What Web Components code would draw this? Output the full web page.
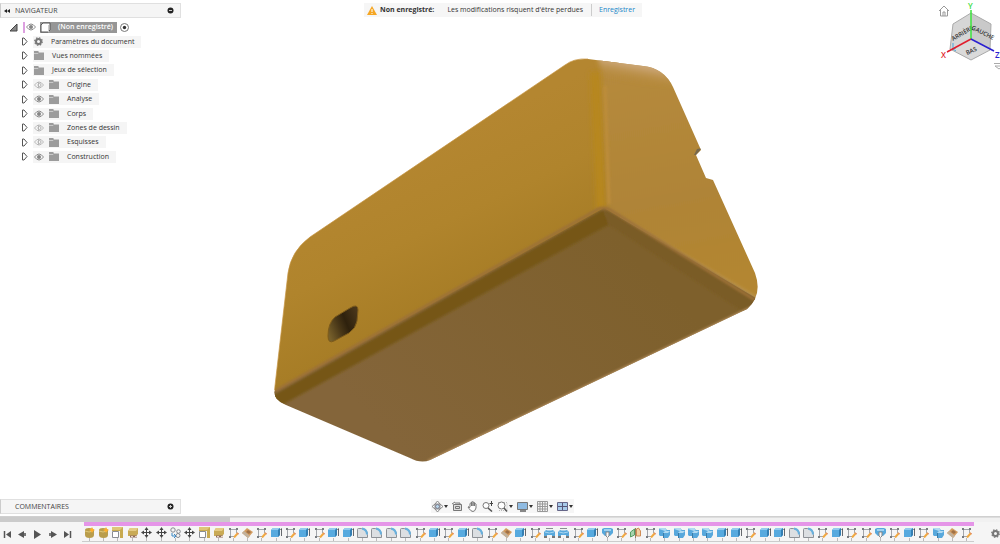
<!DOCTYPE html>
<html lang="fr">
<head>
<meta charset="utf-8">
<title>Modélisation</title>
<style>
html,body{margin:0;height:100%;overflow:hidden}
body{font-family:"Open Sans","Noto Sans",sans-serif;font-size:7px;line-height:12px;color:#333;background:#fff}
</style>
</head>
<body>
<cad-app></cad-app>
<script>
const base = `*{box-sizing:border-box}button{all:unset;display:flex;flex:none;cursor:pointer}svg{display:block;flex:none}`;
const svg = (w, h, body) => `<svg width="${w}" height="${h}" viewBox="0 0 ${w} ${h}" fill="none" aria-hidden="true">${body}</svg>`;
const define = (name, render) => customElements.define(name, class extends HTMLElement {
  connectedCallback() {
    if (this.shadowRoot) return;
    const t = document.createElement('template');
    t.innerHTML = render(this);
    this.attachShadow({ mode: 'open' }).append(t.content.cloneNode(true));
  }
});

const sketch = `<path d="M2.500 2v7M2 2.500h6.500V6M2 9.500h4" stroke="#a3a6ab"/><path d="M1 1h2v2H1zM8 1h2v2H8zM1 9h2v2H1z" fill="#777b80"/><path d="M6 10.500L10 6" stroke="#f0a840" stroke-width="2"/><path d="M9 6l2 1" stroke="#e08a6a"/>`;
const blueBox = `<path d="M0 3l2-2h7v7l-2 2H0z" fill="#57aadf"/><path d="M0 3l2-2h7L7 3z" fill="#94cbee"/><path d="M7 3l2-2v7l-2 2z" fill="#347fb3"/>`;
const goldBox = `<path d="M1 4l2-3h8v6L9 9H1z" fill="#c9aa55"/><path d="M1 4l2-3h8L9 4z" fill="#e5cb85"/>`;
const icons = {
  N: svg(11, 11, `<path d="M1 3q0-2 4-2t5 2v5q0 3-4.500 3T1 8z" fill="#b99d4c"/><path d="M1 4q4 2 8 0" stroke="#e0c878"/><path d="M8 0l1 2 2 1-2 1-1 2-1-2-2-1 2-1z" fill="#ffae2b"/>`),
  Q: svg(11, 11, `<path d="M0 0h11v11H8V4H0z" fill="#c8aa50"/><path d="M0 0h11L8 3H0z" fill="#dfc578"/><path d="M.5 4.500h6v6h-6z" fill="#fff" stroke="#8a8d92"/>`),
  L: svg(11, 11, goldBox + `<path d="M3 9.500h7" stroke="#8c6a5c" stroke-width="2"/><path d="M4 9.500h2M8 9.500h2" stroke="#e7d5c8"/>`),
  M: svg(11, 11, `<path d="M5.500 2v7M2 5.500h7" stroke="#454545"/><path d="M5.500 0l2 3h-4zM5.500 11l2-3h-4zM0 5.500l3-2v4zM11 5.500l-3-2v4z" fill="#454545"/>`),
  J: svg(11, 11, `<circle cx="3" cy="3" r="2.200" stroke="#85888d"/><circle cx="8.500" cy="4.500" r="1.800" stroke="#85888d"/><circle cx="8" cy="8.500" r="2" stroke="#85888d"/><path d="M2 6v3h3M4 7l2 2-2 2" stroke="#3b88c4"/>`),
  S: svg(11, 11, sketch),
  P: svg(11, 11, `<path d="M0 6l5-5 6 4-5 6z" fill="#d39c60"/><path d="M0 6l2-2 6 5-2 2z" fill="#c1b19c"/><path d="M4 5l2-2 3 2-2 2z" fill="#9f7147"/>`),
  E: svg(11, 11, blueBox + `<path d="M10.500 2v7" stroke="#66696e"/><path d="M9 3l1.500-2L12 3z" fill="#55585c"/>`),
  F: svg(11, 11, `<path d="M.5 2.500q0-1 1-1h3q6 1 6 6v3H.5z" fill="#dcdfe2" stroke="#8d9196"/><path d="M5 1.500q5 1 5 6" stroke="#68b0dd" stroke-width="2"/>`),
  R: svg(11, 11, `<path d="M0 5l2-2q3 1 7 0l2 2v5H8V8H3v2H0z" fill="#58a8dc"/><path d="M1 5q4 2 9 0" stroke="#a9d6f1"/><path d="M2 1.500h7" stroke="#8a8d92"/><path d="M0 10h3M8 10h3" stroke="#777" stroke-width="2"/>`),
  H: svg(11, 11, `<path d="M0 2l2-1h7l2 1v4L8 9H3L0 6z" fill="#57a8dc"/><path d="M2 2h7v2H2z" fill="#9fd2f0"/><path d="M4 5h3v4L5.500 10.500 4 9z" fill="#f8f8f8" stroke="#888"/>`),
  W: svg(11, 11, `<path d="M.5 10V5l4-3v6z" fill="#a6d3ad" stroke="#599e65"/><path d="M6.500 9V2l2-1 2 3v5z" fill="#f3cfa2" stroke="#d08d55"/><path d="M5.500 1v10" stroke="#9b7c5d"/>`),
  C: svg(11, 11, `<path d="M0 2l1-1h5l2 2h3v5l-2 3H4V9H1L0 8z" fill="#58a8dc"/><path d="M0 2l1-1h5l2 2-2 1zM4 6l2-2h5L9 6z" fill="#b0daf2"/><path d="M4.500 6v5" stroke="#3b7ba6"/>`)
};
const steps = 'NNQLMMJMQLSPSESESEEFFFFSESEFSPESRRSEHSWSCCCCEESEEFFSESSHSESCPS';
const names = {N:'Nouveau composant',Q:'Base',L:'Liaison rigide',M:'Déplacer',J:'Joint',S:'Esquisse',P:'Plan',E:'Extrusion',F:'Congé',R:'Révolution',H:'Perçage',W:'Symétrie',C:'Combiner'};

const knob = (d) => svg(7, 7, `<circle cx="3.500" cy="3.500" r="3" fill="#222"/><path d="${d}" stroke="#ccc"/>`);
const folder = svg(10, 9, `<path d="M0 0h4l1 1h5v8H0z" fill="#9c9c9c"/><path d="M0 2.500h4l1-1h5" stroke="#c9c9c9"/>`);
const eye = svg(10, 8, `<path d="M.5 4q4.500-6 9 0-4.500 6-9 0z" stroke="#8c8c8c"/><circle cx="5" cy="4" r="2" fill="#858585"/>`);
const eyeOff = svg(10, 8, `<path d="M.5 4q4.500-6 9 0-4.500 6-9 0zM4.500 1v6" stroke="#b8b8b8"/><circle cx="5.500" cy="4" r="1.500" stroke="#b5b5b5"/>`);
const gear = svg(9, 9, `<circle cx="4.500" cy="4.500" r="2.500" stroke="#777" stroke-width="2"/><circle cx="4.500" cy="4.500" r="3.800" stroke="#777" stroke-width="1.200" stroke-dasharray="1.500 1.480"/>`);
const arrow = svg(7, 9, `<path d="M1.500 1v7H3l3-3.500L3 1z" fill="#fff" stroke="#555"/>`);

define('cad-panel', el => `<style>${base}
:host{display:flex;align-items:center;width:181px;height:15px;padding:0 6px 0 3px;background:#f5f5f5;border:1px solid #e0e0e0;border-left-color:#ccc}
.fold{width:11px}h2{flex:1;margin:0;font-size:7px;font-weight:400;color:#444}</style>
<span class="fold">${el.hasAttribute('collapsible') ? svg(6, 6, '<path d="M3 1v4L0 3zM6 1v4L3 3z" fill="#222"/>') : ''}</span>
<h2><slot></slot></h2><button aria-label="Options du panneau">${knob(el.hasAttribute('collapsible') ? 'M2 3.500h3' : 'M2 3.500h3M3.500 2v3')}</button>`);

define('tree-item', el => {
  const k = el.getAttribute('kind'), v = el.getAttribute('visible');
  return `<style>${base}
:host{display:flex;align-items:center;padding-left:21px}
.label{display:flex;align-items:center;height:12px;margin-left:5px;padding:0 7px 0 1px;background:#f5f5f5;white-space:nowrap}
.eye{margin-right:5px}.text{margin-left:${k === 'gear' || !v ? 8 : 8}px}</style>
<button aria-label="Développer">${arrow}</button>
<div class="label">${v ? `<button class="eye" aria-label="Visibilité">${v === 'on' ? eye : eyeOff}</button>` : ''}${k === 'gear' ? gear : folder}<span class="text"><slot></slot></span></div>`;
});

define('tree-root', () => `<style>${base}
:host{display:flex;align-items:center;padding-left:9px}
.bar{width:2px;height:11px;margin:0 1px 0 5px;background:#dda0e0}
.name{display:flex;align-items:center;gap:7px;height:11px;margin:0 3px 0 4px;padding-right:4px;background:#969696;color:#fff;font-weight:600;white-space:nowrap}</style>
<button aria-label="Réduire">${svg(9, 9, '<path d="M8 1v7H1z" fill="#888" stroke="#444"/>')}</button><span class="bar"></span>
<button aria-label="Visibilité">${eye}</button>
<span class="name">${svg(11, 11, '<path d="M1 3l2-2h7v7l-2 2H1z" fill="#fff" stroke="#555"/><path d="M8.500 3v7" stroke="#ccc"/>')}<slot></slot></span>
<button aria-label="Activer">${svg(9, 9, '<circle cx="4.500" cy="4.500" r="4" fill="#fff" stroke="#777"/><circle cx="4.500" cy="4.500" r="1.700" fill="#333"/>')}</button>`);

define('cad-browser', () => `<style>${base}
:host{display:block}.tree{display:grid;grid-auto-rows:1fr;min-height:144px;margin-top:2px}</style>
<cad-panel collapsible>NAVIGATEUR</cad-panel>
<div class="tree"><tree-root>(Non enregistré)</tree-root>
<tree-item kind="gear">Paramètres du document</tree-item>
<tree-item>Vues nommées</tree-item><tree-item>Jeux de sélection</tree-item>
<tree-item visible="off">Origine</tree-item><tree-item visible="on">Analyse</tree-item>
<tree-item visible="on">Corps</tree-item><tree-item visible="off">Zones de dessin</tree-item>
<tree-item visible="off">Esquisses</tree-item><tree-item visible="on">Construction</tree-item></div>`);

define('save-banner', () => `<style>${base}
:host{display:flex;align-items:center;height:14px;padding:0 7px 0 3px;background:#f6f6f6;white-space:nowrap}
strong{margin:0 13px 0 3px;font-weight:700}a{margin-left:8px;padding-left:7px;border-left:1px solid #ccc;color:#1687c9;text-decoration:none}</style>
${svg(10, 9, '<path d="M5 0l5 9H0z" fill="#f5a623"/><path d="M5 3v3M5 7v1" stroke="#fff"/>')}
<strong>Non enregistré:</strong><span>Les modifications risquent d'être perdues</span><a href="#save">Enregistrer</a>`);

define('view-cube', () => `<style>:host{display:block}svg{display:block}text{font-family:"Open Sans",sans-serif}</style>
<svg width="64" height="72" viewBox="936 0 64 72" fill="none" role="img" aria-label="Cube de vue">
<path d="M939 11l5-5 5 5M940.500 10v6h7v-6M943 16v-4h2v4" fill="#fff" stroke="#999"/>
<path d="M971 13l-18 11-3 25 21-10z" fill="#d6d6d6"/><path d="M971 13l20 11-1 26-19-11z" fill="#c9c9c9"/><path d="M950 49l21-10 19 11-19 10z" fill="#dadada"/>
<path d="M971 13l-18 11-3 25 21 11 19-10 1-26z" stroke="#aaa"/>
<g fill="#333" font-weight="600" font-size="6"><text x="953" y="41" transform="rotate(-30 953 41)">ARRIÈRE</text><text x="971" y="29" transform="rotate(27 971 29)">GAUCHE</text><text x="967" y="55" transform="rotate(-24 967 55)">BAS</text></g>
<path d="M953 43v6l3 2M952 49l4-1" stroke="#4aa5dc"/>
<path d="M971 39V10" stroke="#3be33b" stroke-width="1.500"/><path d="M971 39l-24 13" stroke="#e01e2d" stroke-width="1.500"/><path d="M971 39l23 12" stroke="#2a1fd0" stroke-width="1.500"/>
<g font-size="8" font-weight="600"><text x="968" y="9" fill="#3bdc3b">Y</text><text x="941" y="58" fill="#e01e2d">X</text><text x="995" y="58" fill="#2a1fd0">Z</text></g>
<path d="M994 63.500h8M995 66l4 3 4-3z" fill="#fff" stroke="#aaa"/></svg>`);

define('model-view', () => `<style>:host{display:block;min-width:0;min-height:0}svg{display:block;width:100%;height:100%}</style>
<svg viewBox="0 0 1000 516" role="img" aria-label="Boîtier">
<defs>
<linearGradient id="left" gradientUnits="userSpaceOnUse" x1="390" y1="165" x2="455" y2="300"><stop offset="0" stop-color="#b48630"/><stop offset=".5" stop-color="#b0842c"/><stop offset="1" stop-color="#a77d26"/></linearGradient>
<linearGradient id="right" gradientUnits="userSpaceOnUse" x1="650" y1="60" x2="690" y2="290"><stop offset="0" stop-color="#b68a3c"/><stop offset=".6" stop-color="#af8437"/><stop offset="1" stop-color="#b38630"/></linearGradient>
<linearGradient id="base" gradientUnits="userSpaceOnUse" x1="620" y1="240" x2="400" y2="450"><stop offset="0" stop-color="#7e602c"/><stop offset="1" stop-color="#84653a"/></linearGradient>
<linearGradient id="hole" x1="0" y1=".75" x2="1" y2=".25"><stop offset="0" stop-color="#77602b"/><stop offset=".35" stop-color="#4a3818"/><stop offset=".6" stop-color="#2e210d"/><stop offset="1" stop-color="#49361a"/></linearGradient>
<linearGradient id="top" gradientUnits="userSpaceOnUse" x1="625" y1="63" x2="622" y2="80"><stop offset="0" stop-color="#cda87a"/><stop offset="1" stop-color="#b68a3c" stop-opacity="0"/></linearGradient>
<filter id="soft" filterUnits="userSpaceOnUse" x="200" y="0" width="640" height="516"><feGaussianBlur stdDeviation="1"/></filter>
<filter id="softer" filterUnits="userSpaceOnUse" x="200" y="0" width="640" height="516"><feGaussianBlur stdDeviation="2.500"/></filter>
<clipPath id="body"><path d="M274.500 390L288 273Q291 251 310 237L565 65Q574 58 588 59L643 66Q664 68 673 87L701 150 696 155 706 178 713 180 755 273Q763 295 747 309L430 460Q421 464 410 458L286 405Q273 400 274.500 390Z"/></clipPath>
</defs>
<g clip-path="url(#body)">
<path d="M260 40h360v180L275 400z" fill="url(#left)"/>
<path d="M600 40h190v280L606 212z" fill="url(#right)" filter="url(#softer)"/>
<path d="M596 50l54 5 28 30-74-4z" fill="url(#top)" filter="url(#softer)"/>
<path d="M595 72l6 138" stroke="#b7871c" stroke-width="9" filter="url(#softer)"/>
<path d="M605 86l4 118" stroke="#bd8d3b" stroke-width="3" filter="url(#soft)"/>
<path d="M270 394L604 208 764 303 764 480H270z" fill="url(#base)"/>
<path d="M270 397L603 210 610 224 282 405z" fill="#765719" filter="url(#soft)"/>
<path d="M604 209L762 302 744 312 608 224z" fill="#7a5c26" filter="url(#soft)"/>
<path d="M275 391L595 211Q603 205 612 211L755 300" stroke="#9c7137" stroke-width="3" fill="none" filter="url(#soft)"/>
<path d="M760 304L428 462" stroke="#b18c5c" stroke-width="4" fill="none" filter="url(#soft)"/>
<path d="M696 155l6-7-5 1-3 6z" fill="#77684c"/>
<path d="M286 407L418 463" stroke="#96713c" stroke-width="2"/>
</g>
<path d="M274.500 390L288 273Q291 251 310 237L565 65Q574 58 588 59" stroke="#c79645" fill="none" opacity=".7"/>
<path d="M328 336Q328 323 335 317L350 308Q358 303 358 310L357 321Q356 328 349 333L334 341Q328 344 328 336Z" fill="url(#hole)" stroke="#7d5b1b"/>
</svg>`);

define('nav-tool', el => `<style>${base}
:host{display:flex;align-items:center}button{gap:1px}</style><button aria-label="${el.getAttribute('label')}">${svg(11, 11, {
orbit: '<path d="M5.500 0L8 3H3zM5.500 11L8 8H3zM0 5.500L3 3v5zM11 5.500L8 3v5z" fill="#fff" stroke="#888"/><circle cx="5.500" cy="5.500" r="2" fill="#b8d6ea" stroke="#778"/>',
look: '<path d="M1.500 3.500h8v6h-8zM3 2h5v2" fill="#ddd" stroke="#777"/><path d="M0 3l3-2M3.500 5.500h4v2h-4z" stroke="#777"/>',
pan: '<path d="M3 6V2.500q1-1 1.500 0V5 1q1-1 1.500 0v4V1.500q1-1 1.500 0V5 3q1-1 1.500 0v4q-1 3.500-3 3.500-2 0-4-3L1 6q1-1 2 1" fill="#fff" stroke="#777"/>',
zoom: '<circle cx="4" cy="4.500" r="3" fill="#fff" stroke="#777"/><path d="M6 7l4 3.500" stroke="#555" stroke-width="1.500"/><path d="M9.500 0v5M7.500 2.500h4" stroke="#444"/>',
fit: '<path d="M1 1.500h9v8H1" stroke="#bbb" stroke-dasharray="1 1"/><circle cx="4.500" cy="4.500" r="3.500" fill="#fff" stroke="#777"/><path d="M7 7l3 3.500" stroke="#555" stroke-width="1.500"/>',
display: '<path d="M.5 1.500h10v7H.5z" fill="#8fbbe2" stroke="#777"/><path d="M3 9h6v2H3z" fill="#888"/>',
grid: '<path d="M.5 .5h10v10H.5zM3 1v9M5.500 1v9M8 1v9M1 3h9M1 5.500h9M1 8h9" stroke="#999"/>',
views: '<path d="M.5 1.500h10v8H.5z" fill="#a8cbea" stroke="#668"/><path d="M5.500 2v7M1 5.500h9" stroke="#557"/>'
}[el.getAttribute('icon')])}${el.hasAttribute('menu') ? svg(4, 11, '<path d="M0 4h4L2 7z" fill="#333"/>') : ''}</button>`);

define('nav-bar', () => `<style>${base}:host{display:flex;align-items:center;gap:4px;height:14px;padding:0 1px;background:#f6f6f6}</style>
<nav-tool icon="orbit" label="Orbite" menu></nav-tool><nav-tool icon="look" label="Regarder"></nav-tool><nav-tool icon="pan" label="Panoramique"></nav-tool><nav-tool icon="zoom" label="Zoom"></nav-tool><nav-tool icon="fit" label="Ajuster" menu></nav-tool><nav-tool icon="display" label="Affichage" menu></nav-tool><nav-tool icon="grid" label="Grille" menu></nav-tool><nav-tool icon="views" label="Fenêtres" menu></nav-tool>`);

define('cad-timeline', () => {
  const player = [
    ['Début', '<path d="M2.500 2v7" stroke="#555" stroke-width="1.500"/><path d="M9 2v7L4 5.500z" fill="#555"/>'],
    ['Précédent', '<path d="M7 2v7L1 5.500z" fill="#555"/><path d="M7 4h2v3H7z" fill="#777"/>'],
    ['Lecture', '<path d="M2 1v9l7-4.500z" fill="#555"/>'],
    ['Suivant', '<path d="M4 2v7l6-3.500z" fill="#555"/><path d="M2 4h2v3H2z" fill="#777"/>'],
    ['Fin', '<path d="M8.500 2v7" stroke="#555" stroke-width="1.500"/><path d="M2 2v7l5-3.500z" fill="#555"/>']];
  return `<style>${base}
:host{display:block;background:#f5f5f5}
.scroll{height:6px;border-top:1px solid #d0d0d0;background:linear-gradient(#ddd 1px,#f1f1f1 1px)}
.thumb{width:23%;height:5px;background:#cbcbcb}
.line{display:flex;height:22px}
.player{display:flex;align-items:center;gap:4px;width:84px;padding:2px 0 0 2px}
.track{flex:1;min-width:0;border-top:4px solid #e595e8}
.steps{display:grid;grid-template-columns:repeat(62,1fr);margin-left:-2px;border-bottom:1px solid #ccc}
.steps button{flex-direction:column;align-items:center;padding-top:1px}
.steps button::after{content:"";width:1px;height:3px;background:#bbb}
.gear{align-self:center;width:26px;justify-content:flex-end}
</style><div class="scroll"><div class="thumb"></div></div>
<div class="line"><div class="player">${player.map(([n, b]) => `<button aria-label="${n}">${svg(11, 11, b)}</button>`).join('')}</div>
<div class="track"><div class="steps">${[...steps].map(s => `<button aria-label="${names[s]}">${icons[s]}</button>`).join('')}</div></div>
<button class="gear" aria-label="Paramètres">${gear}</button></div>`;
});

define('cad-app', () => `<style>${base}
:host{display:flex;flex-direction:column;height:100vh}
main{flex:1;min-height:0;display:grid;grid-template:auto 1fr auto/1fr auto 1fr;padding:3px 0 2px}
model-view{grid-area:1/1/4/4;margin:-3px 0 -2px}
cad-browser{grid-area:1/1/3/2}
save-banner{grid-area:1/2;align-self:start;margin-left:6px}
view-cube{grid-area:1/3/3/4;justify-self:end;margin-top:-3px}
.comments{grid-area:3/1}nav-bar{grid-area:3/2;justify-self:center;margin-left:6px}
</style><main><model-view></model-view><cad-browser></cad-browser><save-banner></save-banner><view-cube></view-cube>
<cad-panel class="comments">COMMENTAIRES</cad-panel><nav-bar></nav-bar></main><cad-timeline></cad-timeline>`);
</script>
</body>
</html>
